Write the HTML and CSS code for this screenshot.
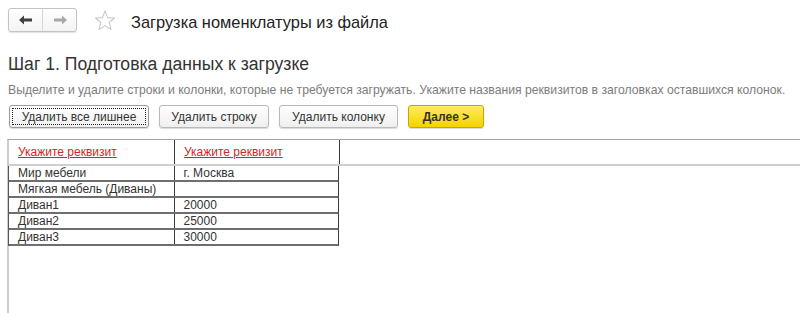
FILE: index.html
```html
<!DOCTYPE html>
<html lang="ru">
<head>
<meta charset="utf-8">
<title>Загрузка номенклатуры из файла</title>
<link rel="stylesheet" href="styles.css">
</head>
<body>
<div class="page">
  <header class="topbar">
    <div class="nav">
      <button class="nav-btn" aria-label="Назад">
        <svg width="14" height="10" viewBox="0 0 14 10"><path d="M0 5 L5 0.5 L5 3.5 L13 3.5 L13 6.5 L5 6.5 L5 9.5 Z" fill="#3f3f3f"/></svg>
      </button>
      <button class="nav-btn" aria-label="Вперёд">
        <svg width="14" height="10" viewBox="0 0 14 10"><path d="M14 5 L9 0.5 L9 3.5 L1 3.5 L1 6.5 L9 6.5 L9 9.5 Z" fill="#a8a8a8"/></svg>
      </button>
    </div>
    <svg class="star" width="22" height="21" viewBox="0 0 22 21"><path d="M11 1 L13.6 7.6 L20.6 8 L15.2 12.5 L17 19.4 L11 15.6 L5 19.4 L6.8 12.5 L1.4 8 L8.4 7.6 Z" fill="none" stroke="#c9c9c9" stroke-width="1.1" stroke-linejoin="round"/></svg>
    <h1 class="title">Загрузка номенклатуры из файла</h1>
  </header>

  <h2 class="step">Шаг 1. Подготовка данных к загрузке</h2>
  <p class="hint">Выделите и удалите строки и колонки, которые не требуется загружать. Укажите названия реквизитов в заголовках оставшихся колонок.</p>

  <div class="actions">
    <button class="btn btn-focus"><span class="focus">Удалить все лишнее</span></button>
    <button class="btn btn-row">Удалить строку</button>
    <button class="btn btn-col">Удалить колонку</button>
    <button class="btn btn-next">Далее &gt;</button>
  </div>

  <div class="sheet">
    <div class="sheet-head">
      <div class="cell head-cell"><a href="#">Укажите реквизит</a></div>
      <div class="cell head-cell"><a href="#">Укажите реквизит</a></div>
    </div>
    <div class="rows">
      <div class="row first"><div class="cell">Мир мебели</div><div class="cell">г. Москва</div></div>
      <div class="row"><div class="cell">Мягкая мебель (Диваны)</div><div class="cell"></div></div>
      <div class="row"><div class="cell">Диван1</div><div class="cell">20000</div></div>
      <div class="row"><div class="cell">Диван2</div><div class="cell">25000</div></div>
      <div class="row"><div class="cell">Диван3</div><div class="cell">30000</div></div>
    </div>
  </div>
</div>
</body>
</html>
```
FILE: styles.css
```css
* { box-sizing: border-box; }
html, body { margin: 0; padding: 0; background: #fff; }
body {
  width: 800px;
  height: 313px;
  overflow: hidden;
  font-family: Arial, "Liberation Sans", sans-serif;
  color: #333;
}
.page { display: flex; flex-direction: column; height: 313px; }

.topbar {
  display: flex;
  align-items: center;
  height: 24px;
  margin: 8px 0 0 8px;
}
.nav {
  display: flex;
  width: 69px;
  height: 24px;
  border: 1px solid #c3c3c3;
  border-radius: 3px;
  background: linear-gradient(#ffffff, #f3f3f3);
  box-shadow: 0 1px 1px rgba(0,0,0,0.12);
}
.nav-btn {
  flex: 1;
  border: 0;
  background: transparent;
  padding: 0;
  display: flex;
  align-items: center;
  justify-content: center;
}
.nav-btn + .nav-btn { border-left: 1px solid #d6d6d6; }
.star { margin-left: 17px; margin-top: 0; }
.title {
  align-self: flex-start;
  margin: 4px 0 0 15px;
  font-size: 16.4px;
  font-weight: normal;
  color: #222;
  line-height: 20px;
}

.step {
  margin: 21px 0 0 8px;
  font-size: 17.6px;
  font-weight: normal;
  line-height: 22px;
  color: #333;
}
.hint {
  margin: 7px 0 0 8px;
  font-size: 12.2px;
  line-height: 16px;
  color: #7c7c7c;
  white-space: nowrap;
}

.actions {
  display: flex;
  gap: 10px;
  margin: 7px 0 0 9px;
  height: 23px;
}
.btn {
  height: 23px;
  padding: 0;
  border: 1px solid #b9b9b9;
  border-radius: 3px;
  background: linear-gradient(#ffffff, #efefef);
  box-shadow: 0 1px 1px rgba(0,0,0,0.15);
  font-family: Arial, "Liberation Sans", sans-serif;
  font-size: 12px;
  color: #333;
  display: flex;
  align-items: center;
  justify-content: center;
}
.btn-focus { width: 140px; border-color: #9a9a9a; padding: 2px; }
.btn-focus .focus {
  flex: 1;
  align-self: stretch;
  display: flex;
  align-items: center;
  justify-content: center;
  border: 1px dotted #222;
}
.btn-row { width: 110px; }
.btn-col { width: 119px; }
.btn-next {
  width: 76px;
  border-color: #c8a600;
  background: linear-gradient(#ffec5c, #f4d300);
  font-weight: bold;
  color: #333;
}

.sheet {
  margin: 11px 0 0 7px;
  flex: 1;
  border-top: 1px solid #a4a4a4;
  border-left: 2px solid #cdcdcd;
}
.sheet-head {
  display: flex;
  height: 26px;
  border-bottom: 2px solid #cfcfcf;
}
.cell {
  width: 165px;
  padding-left: 9px;
  font-size: 12px;
  white-space: nowrap;
  overflow: hidden;
}
.cell + .cell { border-left: 1px solid #3a3a3a; }
.head-cell { display: flex; align-items: center; }
.sheet-head .cell:last-child { border-right: 1px solid #3a3a3a; width: 166px; }
.head-cell a { color: #d02828; text-decoration: underline; }

.rows { width: 331px; border-left: 1px solid #555; margin-left: -1px; }
.row {
  display: flex;
  height: 16px;
  border-bottom: 2px solid #6e6e6e;
  border-right: 1px solid #3a3a3a;
}
.row .cell { line-height: 14px; color: #333; }
.row .cell:first-child { width: 165px; }
```
